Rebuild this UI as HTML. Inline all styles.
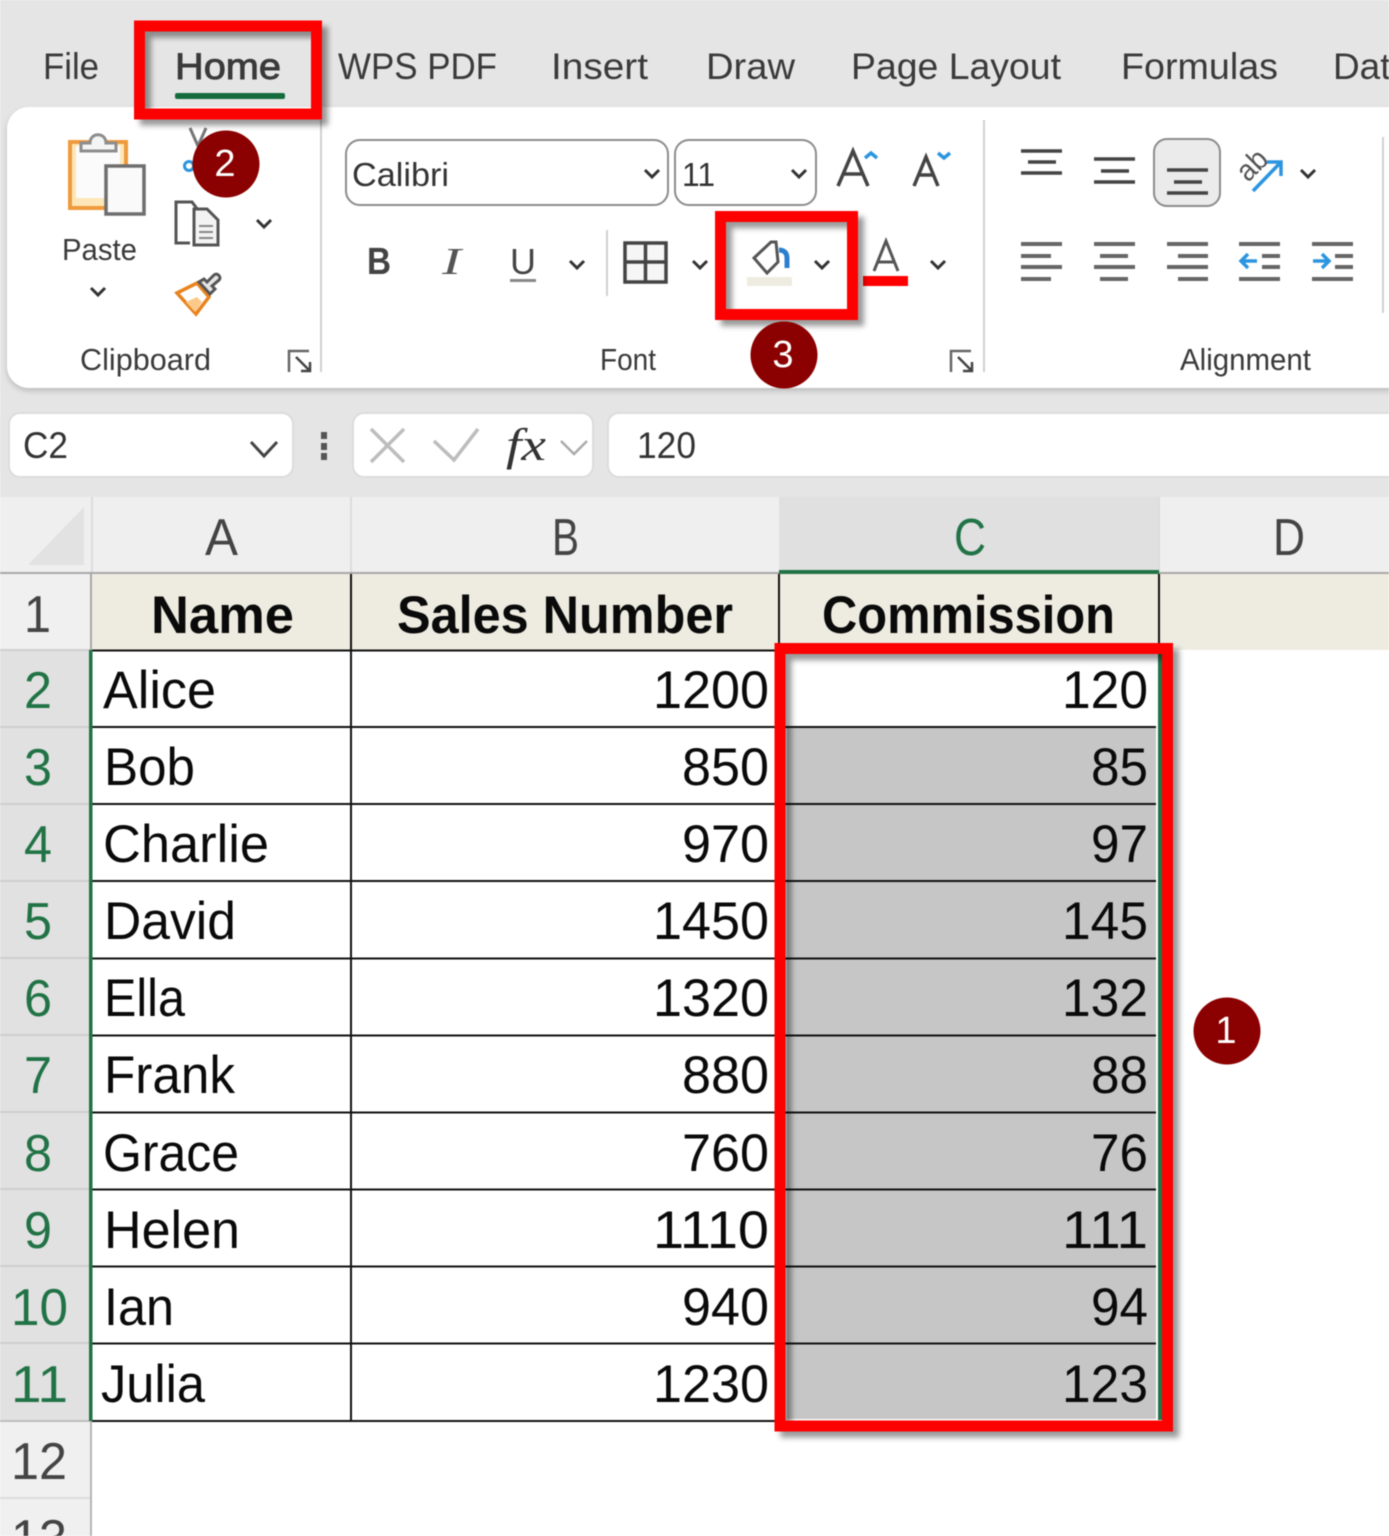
<!DOCTYPE html>
<html><head><meta charset="utf-8"><style>
html,body{margin:0;padding:0;background:#fff;width:1389px;height:1536px;overflow:hidden}
svg{display:block;filter:blur(.5px)}
text{font-family:"Liberation Sans",sans-serif}
.t{font-size:37px;fill:#3a3a3a}
.l{font-size:31px;fill:#3a3a3a}
.c{font-size:53px;fill:#0a0a0a}
.h{font-size:53px;fill:#0a0a0a;font-weight:bold}
.r{font-size:52px;fill:#217346}
.g{font-size:52px;fill:#444}
.n{font-size:38px;fill:#fff}
.ch{fill:none;stroke:#333;stroke-width:3}
.al{stroke:#666;stroke-width:4}
.ad{stroke:#444;stroke-width:3.5}
</style></head><body>
<svg width="1389" height="1536" viewBox="0 0 1389 1536" xmlns="http://www.w3.org/2000/svg">
<defs>
<filter id="s" x="-10%" y="-10%" width="125%" height="125%"><feDropShadow dx="6" dy="6" stdDeviation="3" flood-color="#000" flood-opacity=".4"/></filter>
<filter id="p" x="-5%" y="-5%" width="110%" height="110%"><feDropShadow dx="0" dy="3" stdDeviation="3" flood-color="#000" flood-opacity=".18"/></filter>
</defs>
<rect width="1389" height="497" fill="#e6e5e5"/>
<rect x="7" y="107" width="1420" height="281" rx="22" fill="#fff" filter="url(#p)"/>

<!-- tabs -->
<text class="t" x="43" y="79" textLength="56" lengthAdjust="spacingAndGlyphs">File</text>
<text class="t" x="175" y="79" textLength="106" lengthAdjust="spacingAndGlyphs" style="stroke:#3a3a3a;stroke-width:.9">Home</text>
<rect x="175" y="93" width="110" height="6" rx="2" fill="#146c3c"/>
<text class="t" x="338" y="79" textLength="159" lengthAdjust="spacingAndGlyphs">WPS PDF</text>
<text class="t" x="551" y="79" textLength="97" lengthAdjust="spacingAndGlyphs">Insert</text>
<text class="t" x="706" y="79" textLength="89" lengthAdjust="spacingAndGlyphs">Draw</text>
<text class="t" x="851" y="79" textLength="210" lengthAdjust="spacingAndGlyphs">Page Layout</text>
<text class="t" x="1121" y="79" textLength="157" lengthAdjust="spacingAndGlyphs">Formulas</text>
<text class="t" x="1333" y="79" textLength="78" lengthAdjust="spacingAndGlyphs">Data</text>

<!-- separators -->
<g fill="#d0d0d0"><rect x="320" y="120" width="2" height="252"/><rect x="983" y="120" width="2" height="252"/><rect x="1382" y="137" width="2" height="176"/><rect x="606" y="230" width="2" height="66"/></g>

<!-- clipboard -->
<rect x="70" y="142" width="56" height="66" fill="#fde7b8" stroke="#ef9a3c" stroke-width="4"/>
<rect x="76" y="146" width="44" height="52" fill="#fbfbfb"/>
<path d="M81 151v-8h9c0-11 16-11 16 0h10v8z" fill="#f4f4f4" stroke="#8d8d8d" stroke-width="3"/>
<rect x="106" y="166" width="38" height="48" fill="#fafafa" stroke="#6e6e6e" stroke-width="3.5"/>
<text class="l" x="62" y="260" textLength="75" lengthAdjust="spacingAndGlyphs">Paste</text>
<path class="ch" d="M91 288l7 7 7-7"/>
<path d="M190 128l8 18 8-18" fill="none" stroke="#777" stroke-width="3"/>
<circle cx="189" cy="166" r="4.5" fill="#fff" stroke="#2b95e0" stroke-width="3"/>
<path d="M190 243h-14v-41h16l6 8" fill="#fff" stroke="#555" stroke-width="3"/>
<path d="M194 245v-36h13l11 11v25z" fill="#f3f3f3" stroke="#555" stroke-width="3"/>
<path d="M199 226h14M199 232h14M199 238h14" stroke="#888" stroke-width="2"/>
<path class="ch" d="M257 220l7 7 7-7"/>
<path d="M177 293l20-10 12 14-13 17z" fill="#fff" stroke="#e8831f" stroke-width="3.5"/>
<path d="M186 302l11-5 5 5-7 10z" fill="#fbc98a"/>
<path d="M199 282l11 12 5-5-3-3 7-6c3-3-2-8-5-5l-7 7-3-3z" fill="#e5e5e5" stroke="#555" stroke-width="3"/>
<text class="l" x="80" y="370" textLength="131" lengthAdjust="spacingAndGlyphs">Clipboard</text>
<g id="dl"><path d="M289 372v-21h20" fill="none" stroke="#666" stroke-width="2.5"/><path d="M296 357l13 13M310 362v9h-9" fill="none" stroke="#444" stroke-width="2.5"/></g>

<!-- font -->
<rect x="346" y="140" width="322" height="65" rx="14" fill="#fff" stroke="#8c8c8c" stroke-width="2"/>
<rect x="675" y="140" width="141" height="65" rx="14" fill="#fff" stroke="#8c8c8c" stroke-width="2"/>
<text x="352" y="186" style="font-size:33px;fill:#333" textLength="97" lengthAdjust="spacingAndGlyphs">Calibri</text>
<text x="682" y="186" style="font-size:33px;fill:#333" textLength="33" lengthAdjust="spacingAndGlyphs">11</text>
<path class="ch" d="M645 170l7 7 7-7M792 170l7 7 7-7"/>
<path d="M838 186l15-35 15 35M844 174h18" fill="none" stroke="#444" stroke-width="3.5"/>
<path d="M865 158l6-5 6 5" fill="none" stroke="#2b95e0" stroke-width="3.5"/>
<path d="M914 186l12-29 12 29M919 175h14" fill="none" stroke="#444" stroke-width="3.5"/>
<path d="M938 153l6 5 6-5" fill="none" stroke="#2b95e0" stroke-width="3.5"/>

<text x="367" y="274" style="font-size:38px;font-weight:bold;fill:#444" textLength="24" lengthAdjust="spacingAndGlyphs">B</text>
<text x="442" y="274" style="font-size:38px;font-style:italic;font-family:'Liberation Serif',serif;fill:#555" textLength="19" lengthAdjust="spacingAndGlyphs">I</text>
<text x="510" y="274" style="font-size:36px;fill:#444" textLength="26" lengthAdjust="spacingAndGlyphs">U</text>
<rect x="510" y="279" width="26" height="3" fill="#888"/>
<path class="ch" d="M570 261l7 7 7-7M693 261l7 7 7-7M815 261l7 7 7-7M931 261l7 7 7-7"/>
<rect x="625" y="243" width="41" height="39" fill="#f6f6f6" stroke="#444" stroke-width="3.5"/>
<path d="M645.500 243v39M625 262h41" stroke="#444" stroke-width="3.500"/>
<path d="M754 258l17-16h5l2 20-11 11z" fill="#fff" stroke="#555" stroke-width="3"/>
<path d="M779 250c6 0 8 4 8 8v10" fill="none" stroke="#2b7fd0" stroke-width="5"/>
<rect x="747" y="277" width="45" height="9" fill="#eeece1"/>
<path d="M874 271l12-30 12 30M878 262h16" fill="none" stroke="#555" stroke-width="3"/>
<rect x="863" y="276" width="45" height="10" fill="#f00"/>
<text class="l" x="600" y="370" textLength="56" lengthAdjust="spacingAndGlyphs">Font</text>
<g transform="translate(662,0)"><path d="M289 372v-21h20" fill="none" stroke="#666" stroke-width="2.500"/><path d="M296 357l13 13M310 362v9h-9" fill="none" stroke="#444" stroke-width="2.500"/></g>

<!-- alignment -->
<rect x="1154" y="139" width="66" height="67" rx="13" fill="#ebebeb" stroke="#8c8c8c" stroke-width="2"/>
<path class="ad" d="M1021 151h41M1028 162h28M1021 173h41"/>
<path class="ad" d="M1094 159h41M1101 171h28M1094 182h41"/>
<path class="ad" d="M1167 170h41M1174 182h28M1167 193h41"/>
<text x="0" y="0" transform="translate(1248,183) rotate(-45)" style="font-size:30px;fill:#555" textLength="31" lengthAdjust="spacingAndGlyphs">ab</text>
<path d="M1253 191l28-29M1267 162h14v14" fill="none" stroke="#2b95e0" stroke-width="3.500"/>
<path class="ch" d="M1301 170l7 7 7-7"/>
<path class="al" d="M1021 244h41M1021 256h30M1021 267h41M1021 279h30"/>
<path class="al" d="M1094 244h41M1100 256h28M1094 267h41M1100 279h28"/>
<path class="al" d="M1167 244h41M1178 256h30M1167 267h41M1178 279h30"/>
<path class="al" d="M1239 244h41M1262 256h18M1262 267h18M1239 279h41"/>
<path class="al" d="M1312 244h41M1335 256h18M1335 267h18M1312 279h41"/>
<path d="M1257 261h-16M1248 254l-7 7 7 7" fill="none" stroke="#2b95e0" stroke-width="3.500"/>
<path d="M1313 261h16M1322 254l7 7-7 7" fill="none" stroke="#2b95e0" stroke-width="3.500"/>
<text class="l" x="1180" y="370" textLength="131" lengthAdjust="spacingAndGlyphs">Alignment</text>

<!-- formula bar -->
<g fill="#fff" stroke="#dcdcdc" stroke-width="2">
<rect x="9" y="413" width="284" height="64" rx="11"/>
<rect x="353" y="413" width="240" height="64" rx="11"/>
<rect x="608" y="413" width="800" height="64" rx="11"/>
</g>
<text x="23" y="458" style="font-size:37px;fill:#333" textLength="45" lengthAdjust="spacingAndGlyphs">C2</text>
<path d="M251 442l13 14 13-14" fill="none" stroke="#444" stroke-width="3"/>
<path d="M324 432v7M324 443v7M324 453v7" stroke="#555" stroke-width="6"/>
<path d="M371 429l33 33M404 429l-33 33" stroke="#bdbdbd" stroke-width="3.500"/>
<path d="M434 441l20 19 24-31" fill="none" stroke="#bdbdbd" stroke-width="3.500"/>
<text x="506" y="460" style="font-size:46px;font-style:italic;font-family:'Liberation Serif',serif;fill:#333" textLength="40" lengthAdjust="spacingAndGlyphs">fx</text>
<path d="M561 441l13 13 13-13" fill="none" stroke="#aaa" stroke-width="2.500"/>
<text x="637" y="458" style="font-size:37px;fill:#333" textLength="59" lengthAdjust="spacingAndGlyphs">120</text>

<!-- headers -->
<rect x="0" y="497" width="1389" height="76" fill="#efefef"/>
<rect x="779" y="497" width="380" height="76" fill="#e0e0e0"/>
<rect x="0" y="573" width="92" height="963" fill="#f0f0f0"/>
<rect x="0" y="650" width="90" height="771" fill="#e1e1e1"/>
<path d="M84 507v58H28z" fill="#e2e2e2"/>
<path d="M92 497v76M351 497v76M1159 497v76" stroke="#dcdcdc" stroke-width="2"/>
<rect x="0" y="572" width="1389" height="2" fill="#a8a8a8"/>
<rect x="779" y="570" width="380" height="4" fill="#217346"/>
<text class="g" x="205" y="555" textLength="33" lengthAdjust="spacingAndGlyphs">A</text>
<text class="g" x="552" y="555" textLength="27" lengthAdjust="spacingAndGlyphs">B</text>
<text x="954" y="555" style="font-size:52px;fill:#217346" textLength="32" lengthAdjust="spacingAndGlyphs">C</text>
<text class="g" x="1273" y="555" textLength="32" lengthAdjust="spacingAndGlyphs">D</text>

<!-- row header text -->
<text class="g" x="24" y="632" textLength="27" lengthAdjust="spacingAndGlyphs">1</text>
<text class="r" x="24" y="708" textLength="28" lengthAdjust="spacingAndGlyphs">2</text>
<text class="r" x="24" y="785" textLength="28" lengthAdjust="spacingAndGlyphs">3</text>
<text class="r" x="24" y="862" textLength="28" lengthAdjust="spacingAndGlyphs">4</text>
<text class="r" x="24" y="939" textLength="28" lengthAdjust="spacingAndGlyphs">5</text>
<text class="r" x="24" y="1016" textLength="28" lengthAdjust="spacingAndGlyphs">6</text>
<text class="r" x="24" y="1093" textLength="28" lengthAdjust="spacingAndGlyphs">7</text>
<text class="r" x="24" y="1171" textLength="28" lengthAdjust="spacingAndGlyphs">8</text>
<text class="r" x="24" y="1248" textLength="28" lengthAdjust="spacingAndGlyphs">9</text>
<text class="r" x="11" y="1325" textLength="57" lengthAdjust="spacingAndGlyphs">10</text>
<text class="r" x="11" y="1402" textLength="57" lengthAdjust="spacingAndGlyphs">11</text>
<text class="g" x="11" y="1479" textLength="56" lengthAdjust="spacingAndGlyphs">12</text>
<text class="g" x="11" y="1556" textLength="56" lengthAdjust="spacingAndGlyphs">13</text>
<path d="M0 650h90M0 727h90M0 804h90M0 881h90M0 958h90M0 1035h90M0 1112h90M0 1189h90M0 1266h90M0 1343h90" stroke="#cfcfcf" stroke-width="2"/>
<path d="M0 1421h92" stroke="#bdbdbd" stroke-width="2"/><path d="M0 1498h92" stroke="#dcdcdc" stroke-width="2"/>
<rect x="90" y="1421" width="2.500" height="115" fill="#b5b5b5"/>
<rect x="90" y="573" width="2" height="77" fill="#a8a8a8"/>

<!-- table -->
<rect x="92" y="574" width="1297" height="76" fill="#eeece1"/>
<rect x="92" y="651" width="1297" height="885" fill="#fff"/>
<rect x="787" y="727" width="369" height="692" fill="#c6c6c6"/>
<path d="M92 650.500h1066M92 727h1064M92 804h1064M92 881h1064M92 958.500h1064M92 1035.500h1064M92 1112.500h1064M92 1189.500h1064M92 1266.500h1064M92 1343.500h1064M92 1421h690" stroke="#111" stroke-width="2"/>
<path d="M351 574v847M779 574v847M1159 574v76" stroke="#111" stroke-width="2"/>
<rect x="89" y="650" width="3.500" height="771" fill="#217346"/>
<rect x="1158" y="650" width="4" height="770" fill="#217346"/>

<text class="h" x="151" y="633" textLength="143" lengthAdjust="spacingAndGlyphs">Name</text>
<text class="h" x="397" y="633" textLength="336" lengthAdjust="spacingAndGlyphs">Sales Number</text>
<text class="h" x="822" y="633" textLength="293" lengthAdjust="spacingAndGlyphs">Commission</text>

<text class="c" x="103" y="708" textLength="113" lengthAdjust="spacingAndGlyphs">Alice</text>
<text class="c" x="104" y="785" textLength="91" lengthAdjust="spacingAndGlyphs">Bob</text>
<text class="c" x="103" y="862" textLength="166" lengthAdjust="spacingAndGlyphs">Charlie</text>
<text class="c" x="104" y="939" textLength="132" lengthAdjust="spacingAndGlyphs">David</text>
<text class="c" x="104" y="1016" textLength="81" lengthAdjust="spacingAndGlyphs">Ella</text>
<text class="c" x="104" y="1093" textLength="131" lengthAdjust="spacingAndGlyphs">Frank</text>
<text class="c" x="103" y="1171" textLength="136" lengthAdjust="spacingAndGlyphs">Grace</text>
<text class="c" x="104" y="1248" textLength="136" lengthAdjust="spacingAndGlyphs">Helen</text>
<text class="c" x="104" y="1325" textLength="70" lengthAdjust="spacingAndGlyphs">Ian</text>
<text class="c" x="101" y="1402" textLength="104" lengthAdjust="spacingAndGlyphs">Julia</text>

<text class="c" x="653" y="708" textLength="116" lengthAdjust="spacingAndGlyphs">1200</text>
<text class="c" x="682" y="785" textLength="87" lengthAdjust="spacingAndGlyphs">850</text>
<text class="c" x="682" y="862" textLength="87" lengthAdjust="spacingAndGlyphs">970</text>
<text class="c" x="653" y="939" textLength="116" lengthAdjust="spacingAndGlyphs">1450</text>
<text class="c" x="653" y="1016" textLength="116" lengthAdjust="spacingAndGlyphs">1320</text>
<text class="c" x="682" y="1093" textLength="87" lengthAdjust="spacingAndGlyphs">880</text>
<text class="c" x="682" y="1171" textLength="87" lengthAdjust="spacingAndGlyphs">760</text>
<text class="c" x="653" y="1248" textLength="116" lengthAdjust="spacingAndGlyphs">1110</text>
<text class="c" x="682" y="1325" textLength="87" lengthAdjust="spacingAndGlyphs">940</text>
<text class="c" x="653" y="1402" textLength="116" lengthAdjust="spacingAndGlyphs">1230</text>

<text class="c" x="1062" y="708" textLength="86" lengthAdjust="spacingAndGlyphs">120</text>
<text class="c" x="1091" y="785" textLength="57" lengthAdjust="spacingAndGlyphs">85</text>
<text class="c" x="1091" y="862" textLength="57" lengthAdjust="spacingAndGlyphs">97</text>
<text class="c" x="1062" y="939" textLength="86" lengthAdjust="spacingAndGlyphs">145</text>
<text class="c" x="1062" y="1016" textLength="86" lengthAdjust="spacingAndGlyphs">132</text>
<text class="c" x="1091" y="1093" textLength="57" lengthAdjust="spacingAndGlyphs">88</text>
<text class="c" x="1091" y="1171" textLength="57" lengthAdjust="spacingAndGlyphs">76</text>
<text class="c" x="1062" y="1248" textLength="86" lengthAdjust="spacingAndGlyphs">111</text>
<text class="c" x="1091" y="1325" textLength="57" lengthAdjust="spacingAndGlyphs">94</text>
<text class="c" x="1062" y="1402" textLength="86" lengthAdjust="spacingAndGlyphs">123</text>

<!-- red boxes -->
<g fill="none" stroke="#f00" stroke-width="11" filter="url(#s)">
<rect x="139.500" y="26" width="177" height="88"/>
<rect x="720.500" y="216.500" width="132" height="98"/>
<rect x="780" y="648.500" width="387.500" height="777.500"/>
</g>

<!-- circles -->
<g fill="#8b0000"><circle cx="226" cy="164" r="33.500"/><circle cx="784" cy="355" r="33.500"/><circle cx="1227" cy="1031" r="33.500"/></g>
<text class="n" x="225" y="176" text-anchor="middle">2</text>
<text class="n" x="783" y="367" text-anchor="middle">3</text>
<text class="n" x="1226" y="1043" text-anchor="middle">1</text>
</svg>
</body></html>
